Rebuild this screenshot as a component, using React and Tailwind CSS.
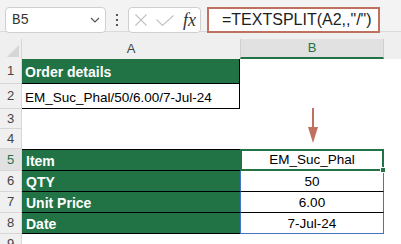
import React from "react";

function RowHead({ n, active }) {
  return (
    <div
      className={`flex items-center justify-center border-b border-r border-[#d6d6d6] text-[13px] ${
        active ? "bg-[#e1e1e1] text-[#217346]" : "bg-[#f0f0f0] text-[#444]"
      }`}
    >
      {n}
    </div>
  );
}

function Empty() {
  return <div className="bg-white" />;
}

function Filler() {
  return <div className="bg-white" />;
}

export default function App() {
  return (
    <div className="relative w-[401px] h-[244px] overflow-hidden bg-white font-['Liberation_Sans',Arial,sans-serif]">
      {/* name box + formula bar */}
      <div className="h-[32px] bg-[#f3f3f3] border-b border-[#dadada] flex items-start pt-[7px]">
        <div className="relative z-10 ml-[5px] w-[101px] h-[26px] rounded-[4px] border border-[#cfcfcf] bg-white flex items-center pl-[6px] pr-[5px]">
          <span className="font-['Liberation_Mono',monospace] text-[14px] text-[#333] leading-none">B5</span>
          <svg className="ml-auto" width="10" height="6" viewBox="0 0 10 6">
            <path d="M1 1l4 4 4-4" fill="none" stroke="#555" strokeWidth="1.2" />
          </svg>
        </div>
        <div className="w-[22px] h-[26px] flex flex-col items-center justify-center gap-[3px]">
          <span className="w-[2px] h-[2px] bg-[#555]" />
          <span className="w-[2px] h-[2px] bg-[#555]" />
          <span className="w-[2px] h-[2px] bg-[#555]" />
        </div>
        <div className="relative z-10 w-[73px] h-[26px] rounded-[4px] border border-[#cfcfcf] bg-white flex items-center pl-[6px]">
          <svg width="12" height="12" viewBox="0 0 12 12">
            <path d="M0.5 0.5l11 11M11.5 0.5l-11 11" stroke="#c2c2c2" strokeWidth="1.1" fill="none" />
          </svg>
          <svg className="ml-[9px]" width="18" height="11" viewBox="0 0 18 11">
            <path d="M0.5 4.5l6 6L17.5 0.5" stroke="#c2c2c2" strokeWidth="1.1" fill="none" />
          </svg>
          <span className="ml-[9px] font-['Liberation_Serif',serif] italic text-[18px] leading-none text-[#333]">fx</span>
        </div>
        <div className="relative z-10 ml-[6px] w-[173px] h-[26px] border-2 border-[#c0705f] bg-white flex items-center pl-[13px]">
          <span className="text-[16px] leading-none text-[#1e1e1e] whitespace-nowrap">=TEXTSPLIT(A2,,"/")</span>
        </div>
      </div>

      {/* band under the bar */}
      <div className="h-[7px] bg-[#efefef]" />

      {/* sheet grid */}
      <div className="grid grid-cols-[22px_218px_144px_17px] grid-rows-[20px_25px_25px_20px_20px_22px_21px_21px_21px_20px] text-[13.5px] text-black">
        {/* header row */}
        <div className="bg-[#efefef] border-r border-[#d6d6d6] flex items-end justify-end pr-[2px] pb-[2px]">
          <svg width="12" height="12" viewBox="0 0 12 12">
            <path d="M12 0V12H0Z" fill="#d6d6d6" />
          </svg>
        </div>
        <div className="bg-[#efefef] flex items-center justify-center text-[13px] text-[#444]">A</div>
        <div className="bg-[#e1e1e1] border-x border-[#d0d0d0] border-b-2 border-b-[#217346] flex items-center justify-center text-[13px] text-[#217346]">B</div>
        <div className="bg-[#efefef]" />

        {/* row 1 */}
        <RowHead n="1" />
        <div className="bg-[#217346] border-b border-r border-black flex items-end pl-[3px] pb-[3px] font-bold text-[14px] leading-[16px] text-white">
          Order details
        </div>
        <Empty />
        <Filler />

        {/* row 2 */}
        <RowHead n="2" />
        <div className="bg-white border-b border-r border-black flex items-end pl-[3px] pb-[2px] leading-[16px] whitespace-nowrap">
          EM_Suc_Phal/50/6.00/7-Jul-24
        </div>
        <Empty />
        <Filler />

        {/* row 3 */}
        <RowHead n="3" />
        <Empty />
        <Empty />
        <Filler />

        {/* row 4 */}
        <RowHead n="4" />
        <Empty />
        <Empty />
        <Filler />

        {/* row 5 */}
        <RowHead n="5" active />
        <div className="bg-[#217346] border-y border-black flex items-end pl-[4px] pb-[1px] font-bold text-[14px] leading-[16px] text-white">
          Item
        </div>
        <div className="relative bg-white border-2 border-[#217346] flex items-end justify-center pb-[1px] leading-[16px]">
          EM_Suc_Phal
          <span className="absolute z-10 right-[-4px] bottom-[-4px] w-[6px] h-[6px] bg-[#217346] border border-white" />
        </div>
        <Filler />

        {/* row 6 */}
        <RowHead n="6" />
        <div className="bg-[#217346] border-b border-black flex items-end pl-[4px] pb-[1px] font-bold text-[14px] leading-[16px] text-white">
          QTY
        </div>
        <div className="bg-white border-x border-x-[#4472c4] border-b border-b-black flex items-end justify-center pb-[1px] leading-[16px]">
          50
        </div>
        <Filler />

        {/* row 7 */}
        <RowHead n="7" />
        <div className="bg-[#217346] border-b border-black flex items-end pl-[4px] pb-[1px] font-bold text-[14px] leading-[16px] text-white">
          Unit Price
        </div>
        <div className="bg-white border-x border-x-[#4472c4] border-b border-b-black flex items-end justify-center pb-[1px] leading-[16px]">
          6.00
        </div>
        <Filler />

        {/* row 8 */}
        <RowHead n="8" />
        <div className="bg-[#217346] border-b border-black flex items-end pl-[4px] pb-[1px] font-bold text-[14px] leading-[16px] text-white">
          Date
        </div>
        <div className="bg-white border-x border-b border-[#4472c4] flex items-end justify-center pb-[1px] leading-[16px]">
          7-Jul-24
        </div>
        <Filler />

        {/* row 9 */}
        <RowHead n="9" />
        <Empty />
        <Empty />
        <Filler />
      </div>

      {/* arrow from row 2 down to the spill */}
      <svg className="absolute left-[308px] top-[108px]" width="10" height="36" viewBox="0 0 10 36">
        <path d="M5 0V20" stroke="#c0705f" strokeWidth="2" />
        <path d="M0 19H10L5 35Z" fill="#c0705f" />
      </svg>
    </div>
  );
}
